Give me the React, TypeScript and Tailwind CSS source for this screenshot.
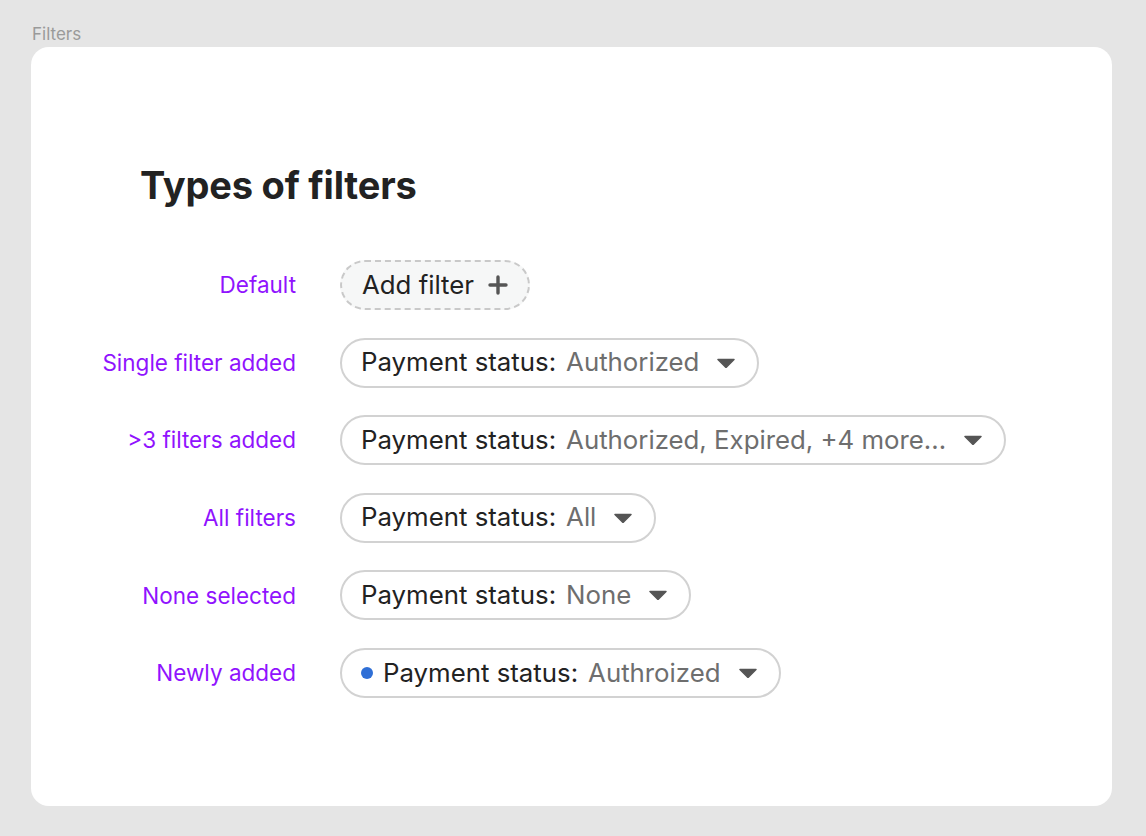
import React from "react";

const Caret = () => (
  <svg width="18" height="10" viewBox="0 0 18 10" className="shrink-0">
    <path d="M1 1.5 L17 1.5 L9 9.5 Z" fill="#555555" strokeLinejoin="round" stroke="#555555" strokeWidth="1.5" />
  </svg>
);

const Plus = () => (
  <svg width="20" height="20" viewBox="0 0 20 20" className="shrink-0">
    <path d="M10 2 V18 M2 10 H18" stroke="#555555" strokeWidth="3.4" strokeLinecap="round" />
  </svg>
);

function Pill({ value, dot }: { value: string; dot?: boolean }) {
  return (
    <div className="flex h-[50px] items-center rounded-full border-2 border-[#d2d2d2] bg-white pl-[19px] pr-[22px]">
      {dot && <span className="mr-[10px] h-[12px] w-[12px] shrink-0 rounded-full bg-[#2f6fd6]" />}
      <span className="text-[#222222]">Payment status:</span>
      <span className="ml-[10px] text-[#6e6e6e]">{value}</span>
      <span className="ml-[18px] flex items-center">
        <Caret />
      </span>
    </div>
  );
}

export default function App() {
  const rows: { label: string; el: React.ReactNode }[] = [
    {
      label: "Default",
      el: (
        <div className="flex h-[50px] items-center rounded-full border-2 border-dashed border-[#c9c9c9] bg-[#f6f7f7] pl-[20px] pr-[20px]">
          <span className="text-[#222222]">Add filter</span>
          <span className="ml-[14px] flex items-center">
            <Plus />
          </span>
        </div>
      ),
    },
    { label: "Single filter added", el: <Pill value="Authorized" /> },
    { label: ">3 filters added", el: <Pill value="Authorized, Expired, +4 more..." /> },
    { label: "All filters", el: <Pill value="All" /> },
    { label: "None selected", el: <Pill value="None" /> },
    { label: "Newly added", el: <Pill value="Authroized" dot /> },
  ];

  return (
    <div
      className="min-h-[836px] w-full bg-[#e5e5e5] px-[31px] pt-[24px]"
      style={{ fontFamily: "Inter, 'Noto Sans', sans-serif" }}
    >
      <div className="mb-[3px] pl-[1px] text-[17px] leading-[20px] text-[#9a9a9a]">Filters</div>
      <div className="h-[759px] w-[1081px] rounded-[18px] bg-white pt-[116px]">
        <h1 className="ml-[109px] text-[38px] font-bold leading-[44px] tracking-[-0.2px] text-[#222222]">
          Types of filters
        </h1>
        <div className="mt-[53px] flex flex-col gap-y-[27.6px]">
          {rows.map((r) => (
            <div key={r.label} className="flex items-center">
              <div className="w-[265px] shrink-0 text-right text-[22.5px] text-[#9013fe]">{r.label}</div>
              <div className="ml-[44px] flex text-[25.8px]">{r.el}</div>
            </div>
          ))}
        </div>
      </div>
    </div>
  );
}
